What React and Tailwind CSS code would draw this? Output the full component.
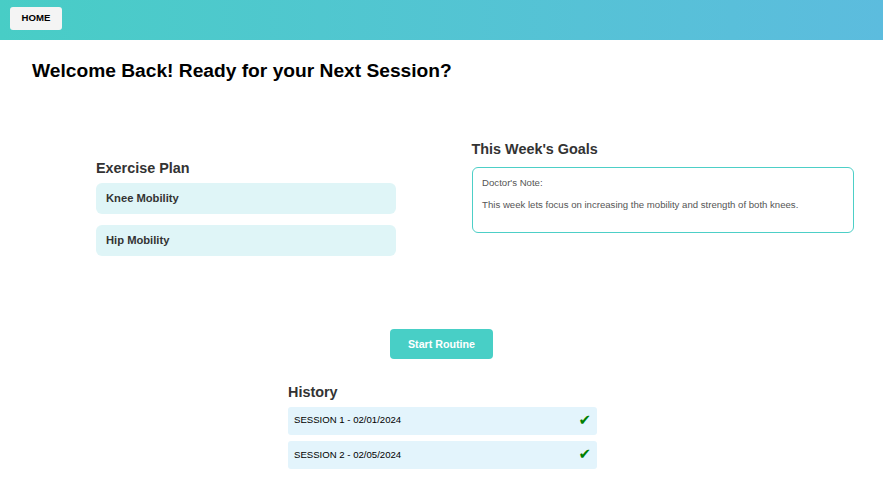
import React from 'react';

const plan = ['Knee Mobility', 'Hip Mobility'];
const sessions = [
  { name: 'SESSION 1', date: '02/01/2024' },
  { name: 'SESSION 2', date: '02/05/2024' },
];

function App() {
  return (
    <div className="min-h-screen bg-white text-black font-['Liberation_Sans',Arial,sans-serif]">
      {/* Top bar */}
      <div className="h-10 bg-gradient-to-r from-[#48cdc6] to-[#5cbcde] flex items-start px-[10px] pt-[7px]">
        <button className="h-[23px] w-[52px] rounded-[3px] bg-[#f4f4f4] text-[9.6px] font-bold text-black flex items-center justify-center">
          HOME
        </button>
      </div>

      <h1 className="pl-8 pt-[19px] text-[19.2px] leading-[23px] font-bold">
        Welcome Back! Ready for your Next Session?
      </h1>

      {/* Plan + goals */}
      <div className="flex items-start ml-[96px] gap-[75.5px] mt-[58px]">
        <div className="w-[300px] mt-[19px]">
          <h2 className="text-[14.4px] leading-[18px] font-bold text-[#333] mb-[6px]">Exercise Plan</h2>
          <div className="flex flex-col gap-[10.7px]">
            {plan.map((p) => (
              <div key={p} className="h-[31px] rounded-[6px] bg-[#dff5f7] px-[10px] flex items-center text-[11.2px] font-bold text-[#333]">
                {p}
              </div>
            ))}
          </div>
        </div>

        <div className="w-[382px]">
          <h2 className="text-[14.4px] leading-[18px] font-bold text-[#333] mb-[9px]">This Week's Goals</h2>
          <div className="border-[1.6px] border-[#4dcfc7] rounded-[6px] px-[9.6px] pt-[7.7px] pb-[19px] text-[9.6px] leading-[14.4px] text-[#555] flex flex-col gap-[8.3px]">
            <p>Doctor's Note:</p>
            <p>This week lets focus on increasing the mobility and strength of both knees.</p>
          </div>
        </div>
      </div>

      <div className="flex justify-center mt-[73px]">
        <button className="w-[103px] h-[30px] rounded-[4px] bg-[#48cfc6] text-white text-[10.7px] font-bold">
          Start Routine
        </button>
      </div>

      {/* History */}
      <div className="w-[309px] mt-[24.5px] ml-[288px]">
        <h2 className="text-[14.4px] leading-[18px] font-bold text-[#333] mb-[5.5px]">History</h2>
        <div className="flex flex-col gap-[6.3px]">
          {sessions.map((s) => (
            <div key={s.name} className="h-[28px] rounded-[3px] bg-[#e3f4fc] px-[6px] flex items-center justify-between text-[9.6px] text-black">
              <span>{s.name} - {s.date}</span>
              <span className="text-[#008000] text-[15px] leading-none font-['DejaVu_Sans',sans-serif]">✔</span>
            </div>
          ))}
        </div>
      </div>
    </div>
  );
}

export default App;
